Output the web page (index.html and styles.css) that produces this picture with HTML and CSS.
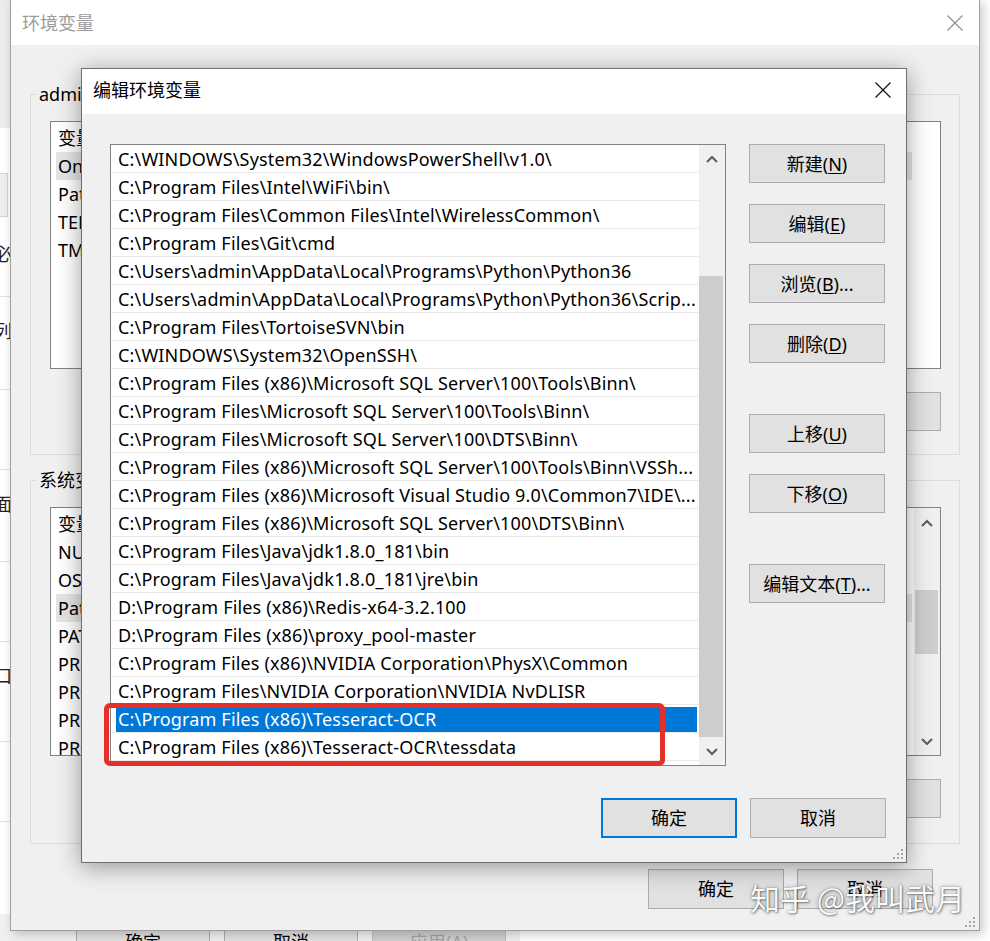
FILE: index.html
```html
<!DOCTYPE html>
<html lang="zh-CN">
<head>
<meta charset="utf-8">
<title>编辑环境变量</title>
<link rel="stylesheet" href="styles.css">
</head>
<body>
<div class="desk">

  <!-- window far behind (system properties) -->
  <div class="win syswin">
    <div class="sys-top"></div>
    <div class="sys-panel">
      <div class="sys-gap"></div>
      <div class="sys-box"></div>
      <div class="sys-row s1"><span>必</span></div>
      <div class="sys-row s2"><span>列</span></div>
      <div class="sys-row s3"></div>
      <div class="sys-row s4"><span>面</span></div>
      <div class="sys-row s5"></div>
      <div class="sys-row s6"><span>口</span></div>
      <div class="sys-row s7"></div>
    </div>
    <div class="sys-actions">
      <button class="btn">确定</button>
      <button class="btn">取消</button>
      <button class="btn disabled">应用(<u>A</u>)</button>
    </div>
  </div>

  <!-- 环境变量 -->
  <div class="win envwin">
    <div class="titlebar inactive">
      <span class="title">环境变量</span>
      <svg class="close" width="16" height="16" viewBox="0 0 16 16"><path d="M0.5 0.5L15.5 15.5M15.5 0.5L0.5 15.5" stroke="#8c8c8c" stroke-width="1.1" fill="none"/></svg>
    </div>
    <div class="env-body">
      <fieldset class="group g-user">
        <legend>admin 的用户变量(<u>U</u>)</legend>
        <div class="group-inner">
          <div class="lv lv-user">
            <div class="lv-rows">
              <div class="lv-head"><span class="c1">变量</span><span class="c2">值</span></div>
              <div class="lv-row sel"><span class="c1">OneDrive</span><span class="c2">C:\Users\admin\OneDrive</span></div>
              <div class="lv-row"><span class="c1">Path</span><span class="c2">C:\Users\admin\AppData\Local\Microsoft\WindowsApps;</span></div>
              <div class="lv-row"><span class="c1">TEMP</span><span class="c2">C:\Users\admin\AppData\Local\Temp</span></div>
              <div class="lv-row"><span class="c1">TMP</span><span class="c2">C:\Users\admin\AppData\Local\Temp</span></div>
            </div>
          </div>
          <div class="group-actions">
            <button class="btn">新建(<u>N</u>)...</button>
            <button class="btn">编辑(<u>E</u>)...</button>
            <button class="btn">删除(<u>D</u>)</button>
          </div>
        </div>
      </fieldset>

      <fieldset class="group g-sys">
        <legend>系统变量(<u>S</u>)</legend>
        <div class="group-inner">
          <div class="lv lv-sys">
            <div class="lv-rows">
              <div class="lv-head"><span class="c1">变量</span><span class="c2">值</span></div>
              <div class="lv-row"><span class="c1">NUMBER_OF_PROCESSORS</span><span class="c2">8</span></div>
              <div class="lv-row"><span class="c1">OS</span><span class="c2">Windows_NT</span></div>
              <div class="lv-row sel"><span class="c1">Path</span><span class="c2">C:\WINDOWS\system32;C:\WINDOWS</span></div>
              <div class="lv-row"><span class="c1">PATHEXT</span><span class="c2">.COM;.EXE;.BAT;.CMD</span></div>
              <div class="lv-row"><span class="c1">PROCESSOR_ARCHITECTURE</span><span class="c2">AMD64</span></div>
              <div class="lv-row"><span class="c1">PROCESSOR_IDENTIFIER</span><span class="c2">Intel64 Family 6</span></div>
              <div class="lv-row"><span class="c1">PROCESSOR_LEVEL</span><span class="c2">6</span></div>
              <div class="lv-row"><span class="c1">PROCESSOR_REVISION</span><span class="c2">9e09</span></div>
            </div>
            <div class="vscroll vs-sys">
              <span class="arr"><svg width="12" height="8" viewBox="0 0 12 8"><path d="M1 7L6 2L11 7" fill="none" stroke="#606060" stroke-width="2.2"/></svg></span>
              <span class="track"><span class="thumb"></span></span>
              <span class="arr"><svg width="12" height="8" viewBox="0 0 12 8"><path d="M1 1L6 6L11 1" fill="none" stroke="#606060" stroke-width="2.2"/></svg></span>
            </div>
          </div>
          <div class="group-actions">
            <button class="btn">新建(<u>W</u>)...</button>
            <button class="btn">编辑(<u>I</u>)...</button>
            <button class="btn">删除(<u>L</u>)</button>
          </div>
        </div>
      </fieldset>

      <div class="env-actions">
        <button class="btn">确定</button>
        <button class="btn">取消</button>
      </div>
    </div>
    <svg class="grip env-grip" width="11" height="11" viewBox="0 0 11 11"><g fill="#a8a8a8"><rect x="8" y="0" width="2" height="2"/><rect x="4" y="4" width="2" height="2"/><rect x="8" y="4" width="2" height="2"/><rect x="0" y="8" width="2" height="2"/><rect x="4" y="8" width="2" height="2"/><rect x="8" y="8" width="2" height="2"/></g></svg>
  </div>

  <!-- 编辑环境变量 -->
  <div class="win editwin">
    <div class="titlebar edit-title">
      <span class="title">编辑环境变量</span>
      <svg class="close" width="16" height="16" viewBox="0 0 16 16"><path d="M0.5 0.5L15.5 15.5M15.5 0.5L0.5 15.5" stroke="#111" stroke-width="1.2" fill="none"/></svg>
    </div>
    <div class="edit-body">
      <div class="edit-main">
        <div class="pathlist">
          <div class="rows">
            <div class="prow">C:\WINDOWS\System32\WindowsPowerShell\v1.0\</div>
            <div class="prow">C:\Program Files\Intel\WiFi\bin\</div>
            <div class="prow">C:\Program Files\Common Files\Intel\WirelessCommon\</div>
            <div class="prow">C:\Program Files\Git\cmd</div>
            <div class="prow">C:\Users\admin\AppData\Local\Programs\Python\Python36</div>
            <div class="prow">C:\Users\admin\AppData\Local\Programs\Python\Python36\Scrip...</div>
            <div class="prow">C:\Program Files\TortoiseSVN\bin</div>
            <div class="prow">C:\WINDOWS\System32\OpenSSH\</div>
            <div class="prow">C:\Program Files (x86)\Microsoft SQL Server\100\Tools\Binn\</div>
            <div class="prow">C:\Program Files\Microsoft SQL Server\100\Tools\Binn\</div>
            <div class="prow">C:\Program Files\Microsoft SQL Server\100\DTS\Binn\</div>
            <div class="prow">C:\Program Files (x86)\Microsoft SQL Server\100\Tools\Binn\VSSh...</div>
            <div class="prow">C:\Program Files (x86)\Microsoft Visual Studio 9.0\Common7\IDE\...</div>
            <div class="prow">C:\Program Files (x86)\Microsoft SQL Server\100\DTS\Binn\</div>
            <div class="prow">C:\Program Files\Java\jdk1.8.0_181\bin</div>
            <div class="prow">C:\Program Files\Java\jdk1.8.0_181\jre\bin</div>
            <div class="prow">D:\Program Files (x86)\Redis-x64-3.2.100</div>
            <div class="prow">D:\Program Files (x86)\proxy_pool-master</div>
            <div class="prow">C:\Program Files (x86)\NVIDIA Corporation\PhysX\Common</div>
            <div class="prow">C:\Program Files\NVIDIA Corporation\NVIDIA NvDLISR</div>
            <div class="prow selected"><span class="hl">C:\Program Files (x86)\Tesseract-OCR</span></div>
            <div class="prow">C:\Program Files (x86)\Tesseract-OCR\tessdata</div>
          </div>
          <div class="vscroll vs-path">
            <span class="arr"><svg width="12" height="8" viewBox="0 0 12 8"><path d="M1 7L6 2L11 7" fill="none" stroke="#606060" stroke-width="2.2"/></svg></span>
            <span class="track"><span class="thumb"></span></span>
            <span class="arr"><svg width="12" height="8" viewBox="0 0 12 8"><path d="M1 1L6 6L11 1" fill="none" stroke="#606060" stroke-width="2.2"/></svg></span>
          </div>
        </div>
        <div class="side">
          <button class="btn">新建(<u>N</u>)</button>
          <button class="btn">编辑(<u>E</u>)</button>
          <button class="btn">浏览(<u>B</u>)...</button>
          <button class="btn">删除(<u>D</u>)</button>
          <button class="btn sep">上移(<u>U</u>)</button>
          <button class="btn">下移(<u>O</u>)</button>
          <button class="btn sep">编辑文本(<u>T</u>)...</button>
        </div>
      </div>
      <div class="edit-actions">
        <button class="btn default">确定</button>
        <button class="btn">取消</button>
      </div>
    </div>
    <svg class="grip edit-grip" width="11" height="11" viewBox="0 0 11 11"><g fill="#a8a8a8"><rect x="8" y="0" width="2" height="2"/><rect x="4" y="4" width="2" height="2"/><rect x="8" y="4" width="2" height="2"/><rect x="0" y="8" width="2" height="2"/><rect x="4" y="8" width="2" height="2"/><rect x="8" y="8" width="2" height="2"/></g></svg>
  </div>

  <div class="annot"></div>
  <div class="watermark">知乎 @我叫武月</div>
</div>
</body>
</html>
```

FILE: styles.css
```css
* { box-sizing: border-box; }
html, body { margin: 0; padding: 0; }
body {
  width: 990px; height: 941px; overflow: hidden; background: #fff;
  font-family: "Noto Sans", "Noto Sans CJK SC", sans-serif;
  font-size: 18px; color: #000;
}
.desk { position: relative; width: 990px; height: 941px; overflow: hidden; background: #fff; }
.win { position: absolute; display: flex; flex-direction: column; }
button { font: inherit; color: inherit; margin: 0; }
u { text-decoration: underline; text-underline-offset: 2px; text-decoration-thickness: 1px; }

.btn {
  width: 136px; height: 39px; padding: 0;
  border: 1px solid #adadad; background: #e1e1e1;
  display: flex; align-items: center; justify-content: center;
  font-size: 18px; line-height: 1; white-space: nowrap; flex-shrink: 0;
}
.btn.disabled { color: #a3a3a3; background: #cfcfcf; border-color: #bcbcbc; }
.btn.default { border: 2px solid #0078d7; }

/* far-back window */
.syswin { left: -12px; top: 0; width: 532px; height: 990px; background: #f0f0f0; }
.sys-top { height: 128px; background: #ececec; }
.sys-panel { height: 786px; background: #fff; display: flex; flex-direction: column; }
.sys-gap { height: 45px; }
.sys-box { height: 44px; width: 20px; background: #eeeeee; border: 1px solid #d4d4d4; }
.sys-row { border-bottom: 1px solid #e3e3e3; padding-left: 6px; line-height: 24px; color: #222; }
.sys-row.s1 { height: 80px; padding-top: 25px; }
.sys-row.s2 { height: 93px; padding-top: 22px; }
.sys-row.s3 { height: 80px; }
.sys-row.s4 { height: 92px; padding-top: 22px; }
.sys-row.s5 { height: 80px; }
.sys-row.s6 { height: 100px; padding-top: 22px; }
.sys-row.s7 { height: 80px; }
.sys-actions { display: flex; gap: 14px; padding: 8px 0 0 88px; }
.sys-actions .btn { width: 134px; height: 40px; }

/* 环境变量 window */
.envwin {
  left: 10px; top: -1px; width: 970px; height: 932px;
  background: #f0f0f0; border: 1px solid #a0a0a0;
  box-shadow: 3px 3px 10px rgba(0,0,0,.22);
}
.titlebar {
  height: 45px; flex-shrink: 0; background: #fff;
  display: flex; align-items: center; justify-content: space-between;
  padding-left: 11px;
}
.edit-title { padding-bottom: 3px; }
.title { font-size: 18px; line-height: 24px; }
.inactive .title { color: #9b9b9b; }
.envwin .close { margin-right: 16px; }
.env-body { flex: 1; padding: 37px 19px 0 19px; display: flex; flex-direction: column; }
fieldset.group { margin: 0; padding: 0; border: 1px solid #dcdcdc; min-width: 0; }
fieldset.group legend {
  margin-left: 6px; padding: 0 2px; height: 24px; line-height: 24px; font-size: 18px;
}
.g-sys { margin-top: 13px !important; }
.group-inner { padding: 15px 18px 23px 19px; }
.g-sys .group-inner { padding-bottom: 25px; }
.lv { background: #fff; border: 1px solid #828282; display: flex; overflow: hidden; }
.lv-user { height: 248px; }
.lv-sys { height: 249px; }
.lv-rows { flex: 1; min-width: 0; }
.lv-head, .lv-row { display: flex; align-items: center; white-space: nowrap; }
.lv-head { height: 30px; }
.lv-row { height: 28px; margin-left: 5px; width: 856px; }
.lv-head .c1 { padding-left: 7px; }
.lv-row .c1 { padding-left: 2px; }
.lv .c1 { width: 300px; flex-shrink: 0; }
.lv-row.sel { background: #e5e5e5; }
.group-actions { display: flex; justify-content: flex-end; gap: 13px; margin-top: 23px; }
.env-actions { display: flex; justify-content: flex-end; gap: 13px; margin-top: 25px; padding-right: 27px; }
.env-actions .btn { height: 40px; }

/* scrollbars */
.vscroll { width: 26px; flex-shrink: 0; background: #f0f0f0; display: flex; flex-direction: column; }
.vscroll .arr { height: 27px; display: flex; align-items: center; justify-content: center; flex-shrink: 0; }
.vscroll .track { flex: 1; display: flex; flex-direction: column; }
.vscroll .thumb { background: #cdcdcd; margin-right: 2px; }
.vs-path .thumb { margin-top: 104px; height: 461px; }
.vs-sys .arr:first-child { height: 30px; }
.vs-sys .thumb { margin-top: 52px; height: 64px; margin-left: 1px; }

/* 编辑环境变量 window */
.editwin {
  left: 81px; top: 68px; width: 826px; height: 795px;
  background: #f0f0f0; border: 1px solid #6f6f6f;
  box-shadow: 0 4px 22px rgba(0,0,0,.38);
}
.editwin .close { margin-right: 15px; }
.edit-body { flex: 1; padding: 30px 20px 0 28px; display: flex; flex-direction: column; }
.edit-main { display: flex; gap: 23px; }
.pathlist { width: 616px; height: 622px; background: #fff; border: 1px solid #828282; display: flex; }
.rows { flex: 1; min-width: 0; }
.prow {
  height: 28px; line-height: 26px; padding-top: 1px; border-bottom: 1px solid #e9e9e9;
  padding-left: 7px; white-space: nowrap; overflow: hidden; letter-spacing: 0.17px;
}
.prow.selected { padding: 2px 2px 0 5px; line-height: 25px; }
.prow .hl { display: block; height: 25px; background: #0078d7; color: #fff; padding-left: 2px; }
.side { display: flex; flex-direction: column; gap: 21px; }
.side .sep { margin-top: 30px; }
.edit-actions { display: flex; justify-content: flex-end; gap: 13px; margin-top: 32px; }
.edit-actions .btn { height: 40px; }

.grip { position: absolute; }
.edit-grip { right: 2px; bottom: 2px; }
.env-grip { right: 3px; bottom: 2px; }

/* overlays */
.annot {
  position: absolute; left: 104px; top: 703px; width: 561px; height: 63px;
  border: 5px solid #e3302a; border-radius: 6px;
}
.watermark {
  position: absolute; left: 750px; top: 878px;
  font-family: "Noto Sans CJK SC", sans-serif; font-size: 30px; line-height: 38px;
  color: #fafafa; white-space: nowrap;
  text-shadow: 0 0 1px rgba(0,0,0,.55), 1px 1px 2px rgba(0,0,0,.35), 0 0 4px rgba(0,0,0,.25);
}
```
